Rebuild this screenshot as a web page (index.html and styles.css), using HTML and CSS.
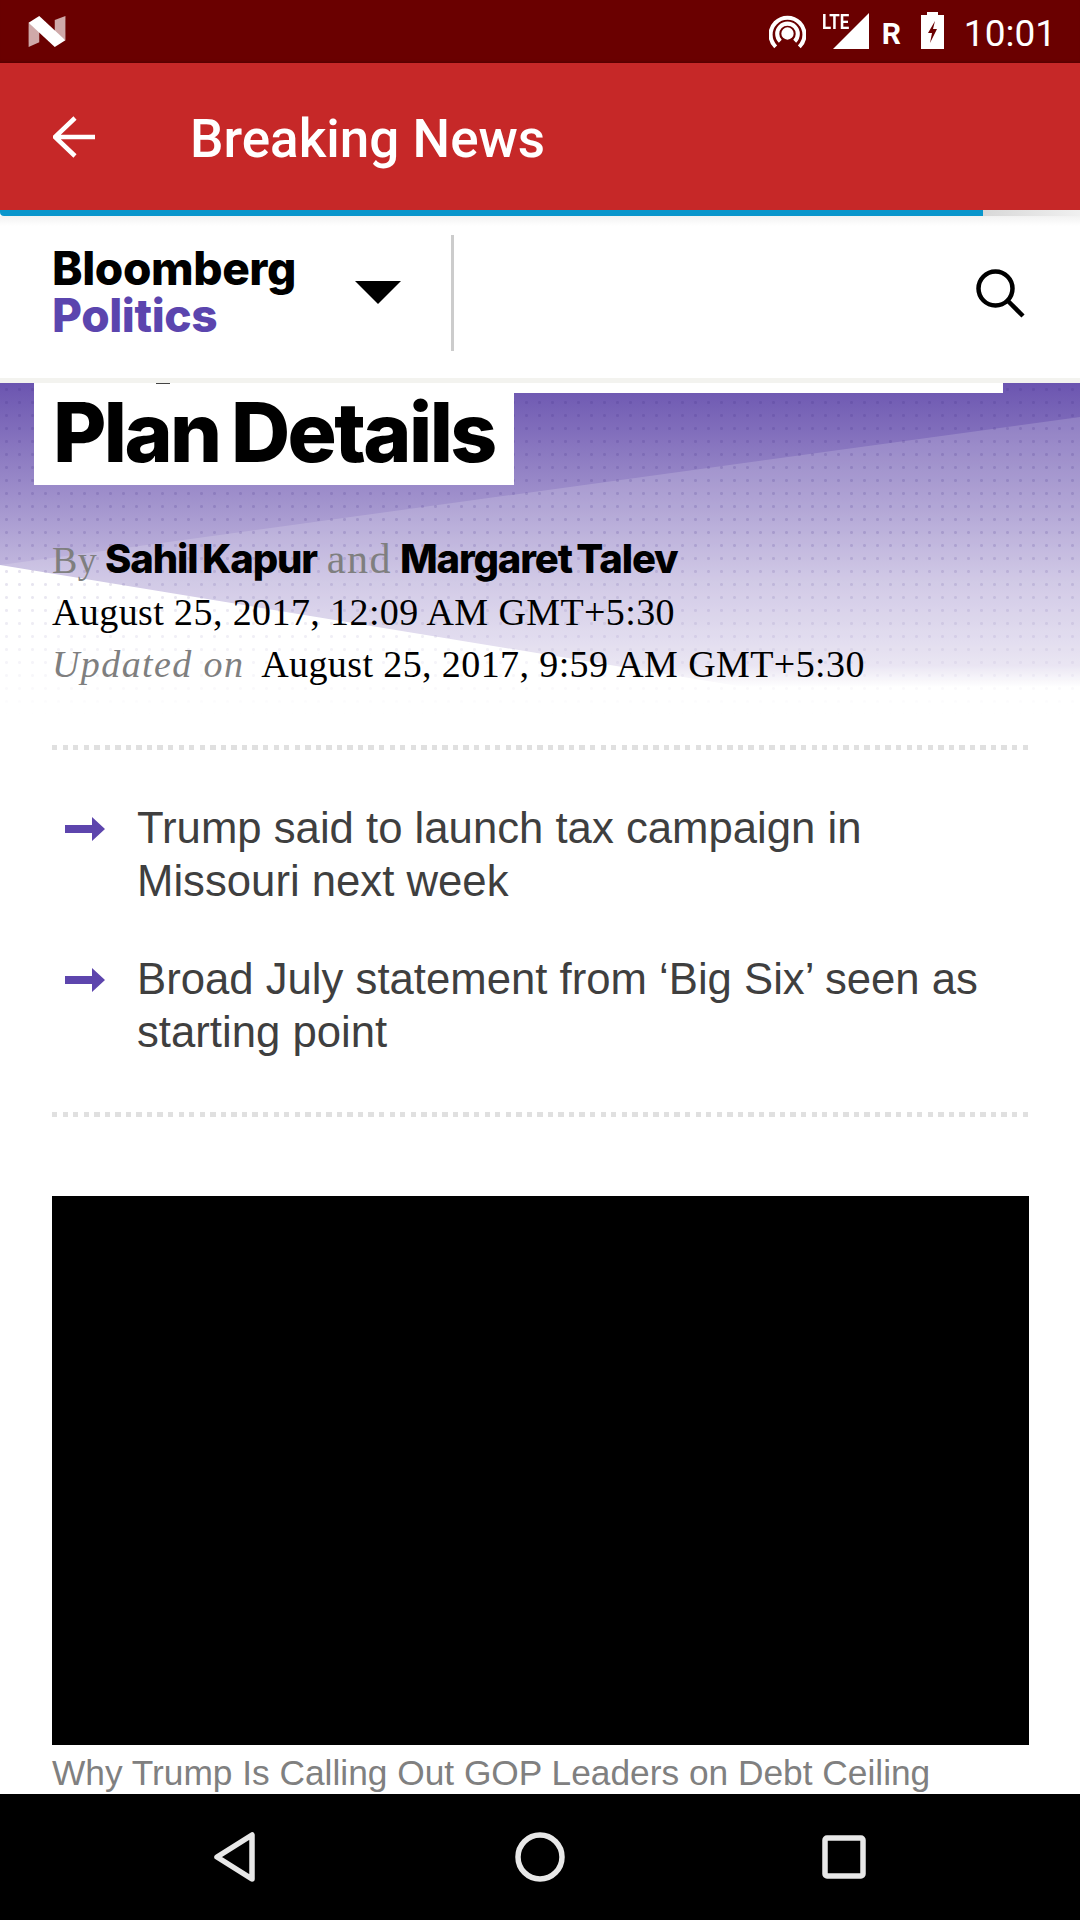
FILE: index.html
```html
<!DOCTYPE html>
<html lang="en">
<head>
<meta charset="utf-8">
<title>Breaking News</title>
<link rel="stylesheet" href="styles.css">
</head>
<body>
<div class="screen">
  <header class="status">
    <svg class="n-logo" viewBox="0 0 38 32"><path class="n-side" d="M0 7 11 11V27L0 32Z"/><path class="n-side" d="M38 0V25L27 17V4Z"/><path class="n-main" d="M0 7 11 0 38 25 27 32Z"/></svg>
    <div class="status-right">
      <svg class="hotspot" viewBox="0 0 36 36"><circle cx="18" cy="18" r="4" fill="#fff"/><path d="M11 25.500A10 10 0 1 1 25 25.500" /><path d="M6.500 31A16.500 16.500 0 1 1 29.500 31" /></svg>
      <div class="signal">
        <span class="lte">LTE</span>
        <svg class="signal-tri" viewBox="0 0 36 36"><path d="M36 0V36H0Z" fill="#fff"/></svg>
      </div>
      <span class="roam">R</span>
      <svg class="battery" viewBox="0 0 23 37"><path fill-rule="evenodd" d="M6 0H17V3H23V37H0V3H6ZM14 9 7 21H11L9 31 16 17H12Z" fill="#fff"/></svg>
      <span class="clock">10:01</span>
    </div>
  </header>

  <div class="appbar">
    <svg class="back" viewBox="0 0 42 42"><path d="M1.500 21H42M22 2 2 21 22 40"/></svg>
    <h1 class="appbar-title">Breaking News</h1>
  </div>
  <div class="progress"></div>

  <div class="brandbar">
    <div class="brand">
      <span class="brand-top">Bloomberg</span>
      <span class="brand-sub">Politics</span>
    </div>
    <svg class="caret" viewBox="0 0 46 23"><path d="M0 0H46L23 23Z"/></svg>
    <div class="divider"></div>
    <svg class="search" viewBox="0 0 50 50"><circle cx="20.500" cy="20.500" r="17"/><path d="M33 33 48 48"/></svg>
  </div>
  <div class="brand-edge"></div>

  <main class="article">
    <section class="hero">
      <div class="headline-wrap">
        <div class="headline-prev"><span class="desc"></span></div>
        <h2 class="headline">Plan Details</h2>
      </div>
      <div class="meta">
        <p class="meta-line"><span class="muted">By</span> <b class="author">Sahil Kapur</b> <span class="muted and">and</span> <b class="author">Margaret Talev</b></p>
        <p class="meta-line">August 25, 2017, 12:09 AM GMT+5:30</p>
        <p class="meta-line"><i class="muted updated">Updated on</i> August 25, 2017, 9:59 AM GMT+5:30</p>
      </div>
    </section>

    <div class="content">
      <div class="dots"></div>
      <ul class="bullets">
        <li class="bullet">
          <svg class="arrow" viewBox="0 0 40 24"><path d="M0 8H27V0L40 12 27 24V16H0Z"/></svg>
          <span>Trump said to launch tax campaign in Missouri next week</span>
        </li>
        <li class="bullet">
          <svg class="arrow" viewBox="0 0 40 24"><path d="M0 8H27V0L40 12 27 24V16H0Z"/></svg>
          <span>Broad July statement from ‘Big Six’ seen as starting point</span>
        </li>
      </ul>
      <div class="dots"></div>
      <div class="video"></div>
      <p class="caption">Why Trump Is Calling Out GOP Leaders on Debt Ceiling</p>
    </div>
  </main>

  <nav class="navbar">
    <svg class="nav-back" viewBox="0 0 42 50"><path d="M38 3V47L3 25Z"/></svg>
    <svg class="nav-home" viewBox="0 0 50 50"><circle cx="25" cy="25" r="22"/></svg>
    <svg class="nav-recent" viewBox="0 0 44 44"><rect x="3" y="3" width="38" height="38" rx="2"/></svg>
  </nav>
</div>
</body>
</html>
```
FILE: styles.css
```css
* { box-sizing: border-box; }
html, body { margin: 0; padding: 0; background: #fff; }
.screen {
  width: 1080px; height: 1920px; overflow: hidden;
  display: flex; flex-direction: column;
  font-family: "Liberation Sans", Arial, sans-serif;
  position: relative;
}

/* status bar */
.status {
  height: 63px; flex: none; background: #6a0000;
  display: flex; align-items: flex-start; justify-content: space-between;
  padding: 16px 24px 0 28px;
  box-shadow: inset 0 -3px 3px -2px rgba(0,0,0,.25);
}
.n-logo { width: 38px; height: 31px; }
.n-main { fill: #fff; }
.n-side { fill: #cfa9a9; }
.status-right { display: flex; align-items: flex-start; }
.hotspot { width: 37px; height: 37px; margin-top: -1px; fill: none; stroke: #fff; stroke-width: 4; }
.signal { width: 54px; height: 38px; margin: -3px 0 0 9px; position: relative; display: flex; justify-content: flex-end; }
.signal-tri { width: 36px; height: 36px; }
.lte {
  position: absolute; left: 7px; top: -1px;
  font: 700 21px/20px "Roboto", sans-serif; color: #fff;
  transform: scaleX(.8); transform-origin: left top;
}
.roam { font: 700 30px/30px "Roboto", sans-serif; color: #fff; margin: 3px 0 0 13px; width: 22px; }
.battery { width: 23px; height: 37px; margin: -4px 0 0 17px; }
.clock { font: 400 37px/38px "Roboto", sans-serif; color: #fff; margin: -1px 0 0 20px; }

/* app bar */
.appbar {
  height: 147px; flex: none; background: #c62828;
  display: flex; align-items: center; padding-left: 53px;
}
.back { width: 42px; height: 42px; fill: none; stroke: #fff; stroke-width: 4.500; }
.appbar-title { margin: 4px 0 0 95px; font: 500 53px/56px "Roboto", sans-serif; color: #fff; }
.progress {
  height: 6px; flex: none; width: 100%;
  background: linear-gradient(90deg, #0a96cc 983px, #d8d8d8 983px, #f0f0f0 100%);
  border-bottom-left-radius: 4px;
}

/* brand bar */
.brandbar {
  height: 162px; flex: none; background: linear-gradient(#f2f2f2, #fff 10px);
  display: flex; align-items: center; padding: 0 55px 9px 52px;
}
.brand { display: flex; flex-direction: column; width: 303px; margin-top: -2px; }
.brand-top, .brand-sub {
  font: 800 46px/47px "Inter", sans-serif; letter-spacing: -.400px;
}
.brand-top { color: #000; }
.brand-sub { color: #5b45ae; }
.caret { width: 46px; height: 23px; fill: #000; }
.divider { width: 3px; height: 116px; background: #ccc; margin-left: 50px; }
.search { width: 50px; height: 50px; margin-left: auto; fill: none; stroke: #000; stroke-width: 4.500; }
.brand-edge { height: 5px; flex: none; background: #f3f3ef; }

/* article */
.article { flex: 1; min-height: 0; }
.hero {
  position: relative; height: 362px;
  background: linear-gradient(#6b55b0, #a091cc 32%, #c9c0e2 55%, #e6e1f1 78%, #fff 84%);
}
.hero::before {
  content: ""; position: absolute; inset: 0;
  background: rgba(255,255,255,.16);
  clip-path: polygon(100% 34px, 0 182px, 0 100%, 100% 100%);
}
.hero::after {
  content: ""; position: absolute; inset: 0;
  background: #fff;
  clip-path: polygon(0 182px, 780px 310px, 1080px 310px, 1080px 100%, 0 100%);
}
.headline-wrap { position: relative; z-index: 2; height: 102px; padding-left: 34px; }
.headline-wrap::before {
  content: ""; position: absolute; left: 0; top: 0; width: 1080px; height: 362px; z-index: -1;
  background-image: radial-gradient(circle, rgba(60,40,130,.17) 1.300px, transparent 1.600px);
  background-size: 13px 13px;
  -webkit-mask-image: linear-gradient(#000 40%, rgba(0,0,0,.35) 75%, transparent 92%);
  mask-image: linear-gradient(#000 40%, rgba(0,0,0,.35) 75%, transparent 92%);
}
.headline-prev { width: 969px; height: 10px; background: #fff; position: relative; }
.desc { position: absolute; left: 122px; top: 0; width: 14px; height: 1px; background: #444; }
.headline {
  margin: 0; width: 480px; height: 92px; background: #fff; padding-left: 19px;
  font: 800 82px/80px "Inter", sans-serif; color: #000;
  letter-spacing: -2.600px; white-space: nowrap; word-spacing: -4px;
}
.meta { position: relative; z-index: 2; padding: 48px 0 0 52px; }
.meta-line {
  margin: 0; font: 400 38px/52px "Liberation Serif", serif; color: #000; white-space: nowrap; letter-spacing: .400px;
}
.muted { color: #7f7f7f; }
.and { font-size: 42px; letter-spacing: 1.500px; }
.author { font: 800 40px/52px "Inter", sans-serif; letter-spacing: -1.150px; word-spacing: -3px; color: #000; margin-left: -2px; }
.updated { margin-right: 9px; letter-spacing: 1.400px; }

.content { padding: 0 51px 0 52px; }
.dots {
  height: 5px;
  background: repeating-linear-gradient(90deg, #e0e0e0 0 5.300px, transparent 5.300px 10.550px);
}
.bullets { list-style: none; margin: 0; padding: 51px 0 54px; }
.bullet {
  display: flex; font-size: 43.700px; line-height: 53px; color: #3f3f3f;
}
.bullet + .bullet { margin-top: 45px; }
.bullet span { width: 860px; }
.arrow { width: 40px; height: 24px; flex: none; margin: 16px 32px 0 13px; fill: #5d45ad; }
.video { height: 549px; margin-top: 79px; background: #000; }
.caption { margin: 0; font-size: 35.300px; line-height: 56px; color: #808080; white-space: nowrap; }

/* nav bar */
.navbar {
  height: 126px; flex: none; background: #000;
  display: grid; grid-template-columns: 301px 307px 1fr; align-items: center; padding-left: 214px;
}
.navbar svg { fill: none; stroke: #e8e8e8; stroke-width: 5.500; stroke-linejoin: round; }
.nav-back { width: 42px; height: 50px; }
.nav-home { width: 50px; height: 50px; }
.nav-recent { width: 44px; height: 44px; }
```
